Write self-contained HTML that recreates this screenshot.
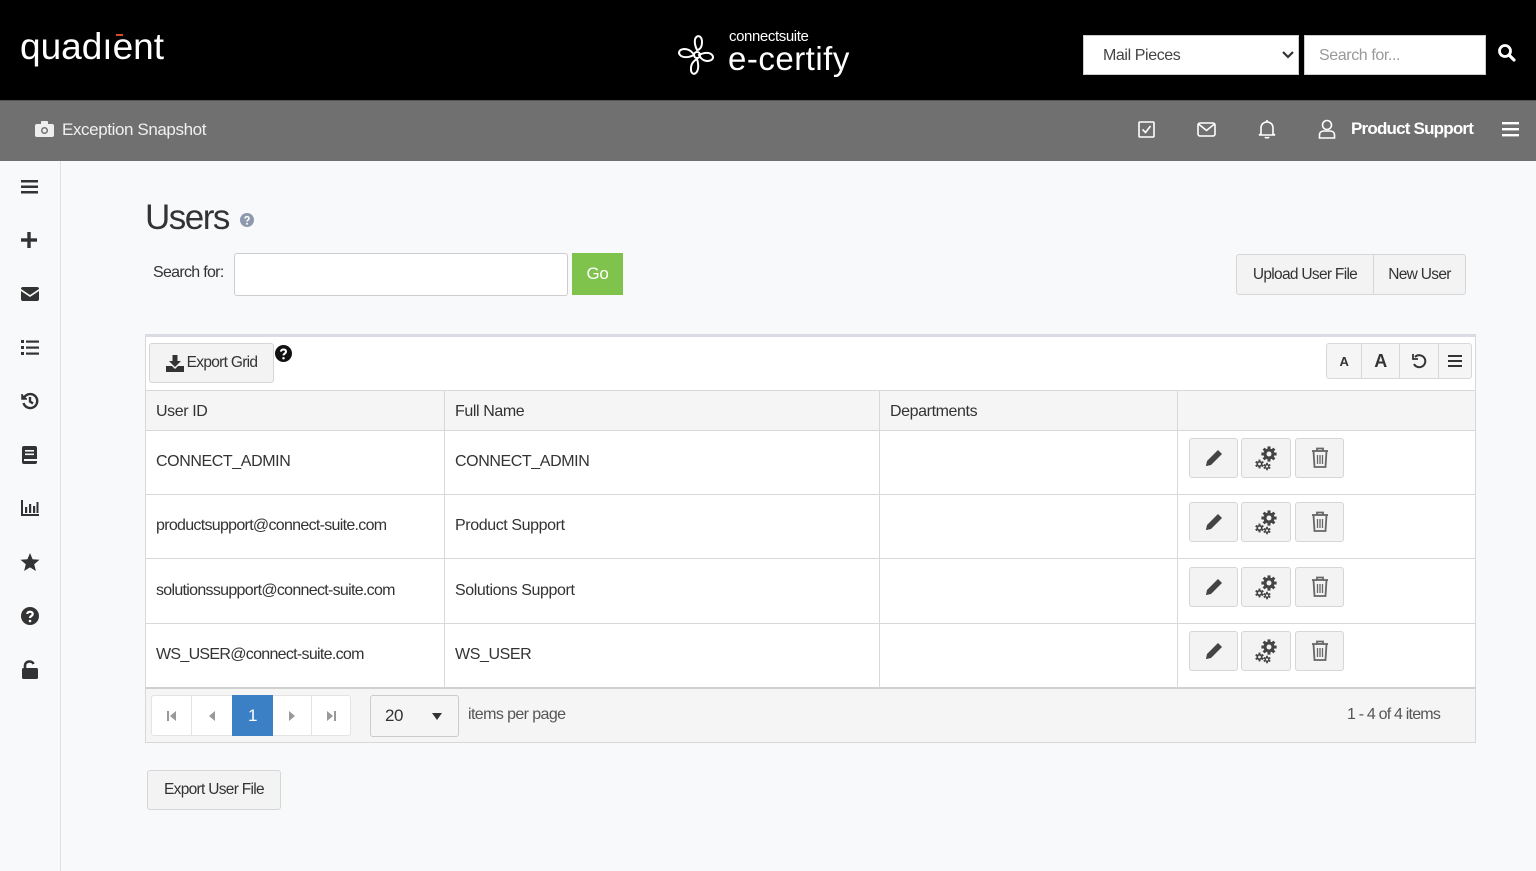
<!DOCTYPE html>
<html><head><meta charset="utf-8"><style>
*{box-sizing:border-box;margin:0;padding:0}
body{width:1536px;height:871px;overflow:hidden;background:#f8f9fb;font-family:"Liberation Sans",sans-serif;color:#333;position:relative;letter-spacing:-0.4px}
.a{position:absolute}
.top{left:0;top:0;width:1536px;height:100px;background:#000}
.bar{left:0;top:100px;width:1536px;height:61px;background:#707070;border-top:1px solid #555}
.side{left:0;top:161px;width:61px;height:710px;border-right:1px solid #dde0e4;background:#f8f9fb}
.btn{background:#f3f3f3;border:1px solid #d6d6d6;border-radius:3px;color:#333;font-size:15.5px;display:flex;align-items:center;justify-content:center}
.cell{font-size:16px;color:#333;display:flex;align-items:center}
.hl{height:1px;background:#d8d8d8;left:145px;width:1331px}
.vl{width:1px;background:#d8d8d8;top:390px;height:298px}
svg{display:block}
</style></head><body>
<div class="a top"></div>
<div class="a" style="left:20px;top:26px;color:#fff;font-size:37px;letter-spacing:0">quadıent</div>
<div class="a" style="left:116px;top:34px;width:7px;height:2px;background:#d84a24"></div>
<svg class="a" style="left:672px;top:30px" width="50" height="50" viewBox="0 0 50 50" fill="none" stroke="#fff" stroke-width="2"><path d="M25 20 C18 5 30 2 30 12 C30 18 27 20 25 20Z"/><path d="M27 25 C40 18 46 30 36 31 C30 31 28 27 27 25Z"/><path d="M25 29 C30 45 18 48 19 38 C19 33 23 30 25 29Z"/><path d="M22 25 C8 32 2 20 12 19 C18 19 21 23 22 25Z"/><circle cx="25" cy="25" r="3"/></svg>
<div class="a" style="left:729px;top:28px;color:#fff;font-size:15px">connectsuite</div>
<div class="a" style="left:728px;top:40px;color:#fff;font-size:33px;letter-spacing:0.5px">e-certify</div>
<div class="a" style="left:1083px;top:35px;width:216px;height:40px;background:#fff;border:1px solid #ccc;font-size:16px;color:#444;padding:11px 0 0 19px">Mail Pieces</div>
<svg class="a" style="left:1282px;top:50px" width="12" height="9" viewBox="0 0 12 9"><path d="M1 2 L6 7 L11 2" stroke="#333" stroke-width="2.2" fill="none"/></svg>
<div class="a" style="left:1304px;top:35px;width:182px;height:40px;background:#fff;border:1px solid #ccc;font-size:16px;color:#999;padding:11px 0 0 14px">Search for...</div>
<svg class="a" style="left:1497px;top:43px" width="20" height="20" viewBox="0 0 20 20"><circle cx="8" cy="8" r="5.5" stroke="#fff" stroke-width="2.8" fill="none"/><path d="M12 12 L17 17" stroke="#fff" stroke-width="3.2" stroke-linecap="round"/></svg>

<div class="a bar"></div>
<svg class="a" style="left:35px;top:121px" width="19" height="16" viewBox="0 0 19 16"><rect x="0" y="3" width="19" height="13" rx="2" fill="#eee"/><rect x="6" y="0" width="7" height="4" rx="1" fill="#eee"/><circle cx="9.5" cy="9.5" r="3.5" fill="#707070"/><circle cx="9.5" cy="9.5" r="2" fill="#eee"/></svg>
<div class="a" style="left:62px;top:120px;color:#f0f0f0;font-size:17px">Exception Snapshot</div>
<svg class="a" style="left:1138px;top:121px" width="17" height="17" viewBox="0 0 17 17" fill="none" stroke="#fff" stroke-width="1.6"><rect x="1" y="1" width="15" height="15" rx="1"/><path d="M4.5 8.5 L7.5 11.5 L12.5 5"/></svg>
<svg class="a" style="left:1197px;top:122px" width="19" height="15" viewBox="0 0 19 15" fill="none" stroke="#fff" stroke-width="1.6"><rect x="1" y="1" width="17" height="13" rx="2"/><path d="M1.5 2 L9.5 8.5 L17.5 2"/></svg>
<svg class="a" style="left:1258px;top:119px" width="18" height="20" viewBox="0 0 18 20" fill="none" stroke="#fff" stroke-width="1.6"><path d="M3 15 L3 9 C3 5 6 3 9 3 C12 3 15 5 15 9 L15 15 L17 16 L1 16 Z"/><path d="M7 18 C7.5 19 10.5 19 11 18"/><path d="M9 1 L9 3"/></svg>
<svg class="a" style="left:1318px;top:119px" width="18" height="20" viewBox="0 0 18 20" fill="none" stroke="#fff" stroke-width="1.6"><circle cx="9" cy="6" r="4.5"/><path d="M1.5 19 L1.5 16 C1.5 13 4 12 6 12 L12 12 C14 12 16.5 13 16.5 16 L16.5 19 Z"/></svg>
<div class="a" style="left:1351px;top:119px;color:#fff;font-size:17px;font-weight:bold;letter-spacing:-0.8px">Product Support</div>
<svg class="a" style="left:1502px;top:122px" width="17" height="15" viewBox="0 0 17 15" fill="#fff"><rect y="0" width="17" height="2.4"/><rect y="6" width="17" height="2.4"/><rect y="12" width="17" height="2.4"/></svg>

<div class="a side"></div>
<svg class="a" style="left:21px;top:180px" width="17" height="14" fill="#333"><rect y="0" width="17" height="2.5"/><rect y="5.5" width="17" height="2.5"/><rect y="11" width="17" height="2.5"/></svg>
<svg class="a" style="left:21px;top:232px" width="16" height="16" fill="#333"><rect x="6.3" y="0" width="3.4" height="16"/><rect x="0" y="6.3" width="16" height="3.4"/></svg>
<svg class="a" style="left:21px;top:287px" width="18" height="14" viewBox="0 0 18 14" fill="#333"><path d="M0 2 Q0 0 2 0 L16 0 Q18 0 18 2 L9 8 Z"/><path d="M0 4 L9 10 L18 4 L18 12 Q18 14 16 14 L2 14 Q0 14 0 12 Z"/></svg>
<svg class="a" style="left:21px;top:340px" width="18" height="15" fill="#333"><rect x="0" y="0" width="3" height="3"/><rect x="5" y="0.5" width="13" height="2.2"/><rect x="0" y="6" width="3" height="3"/><rect x="5" y="6.5" width="13" height="2.2"/><rect x="0" y="12" width="3" height="3"/><rect x="5" y="12.5" width="13" height="2.2"/></svg>
<svg class="a" style="left:21px;top:392px" width="18" height="18" viewBox="0 0 18 18" fill="none" stroke="#333" stroke-width="2.4"><path d="M3.5 5 A7 7 0 1 1 2.5 11"/><path d="M1 2 L1 7 L6 7" fill="#333" stroke-width="1.5"/><path d="M9 5 L9 9.5 L12 11.5"/></svg>
<svg class="a" style="left:22px;top:446px" width="15" height="18" fill="#333"><rect x="0" y="0" width="15" height="18" rx="2"/><rect x="3" y="4" width="9" height="1.6" fill="#f8f9fb"/><rect x="3" y="7.5" width="9" height="1.6" fill="#f8f9fb"/><rect x="2" y="13" width="13" height="2" fill="#f8f9fb"/></svg>
<svg class="a" style="left:21px;top:500px" width="18" height="16" fill="#333"><rect x="0" y="0" width="2" height="16"/><rect x="0" y="14" width="18" height="2"/><rect x="4" y="7" width="2.2" height="6"/><rect x="8" y="4" width="2.2" height="9"/><rect x="12" y="6" width="2.2" height="7"/><rect x="15.5" y="2" width="2" height="11"/></svg>
<svg class="a" style="left:20px;top:553px" width="20" height="19" viewBox="0 0 20 19" fill="#333"><path d="M10 0 L12.6 6.2 L19.5 6.8 L14.2 11.3 L15.9 18 L10 14.4 L4.1 18 L5.8 11.3 L0.5 6.8 L7.4 6.2 Z"/></svg>
<svg class="a" style="left:21px;top:607px" width="18" height="18" viewBox="0 0 18 18"><circle cx="9" cy="9" r="9" fill="#333"/><path d="M6.3 7 C6.3 4 11.7 4 11.7 7 C11.7 9 9 9 9 11" stroke="#fff" stroke-width="2.2" fill="none"/><circle cx="9" cy="14" r="1.3" fill="#fff"/></svg>
<svg class="a" style="left:22px;top:660px" width="16" height="19" viewBox="0 0 16 19"><path d="M3 9 L3 5.5 C3 1 10 0 11.5 4" stroke="#333" stroke-width="2.6" fill="none"/><rect x="0" y="8" width="16" height="11" rx="1.5" fill="#333"/></svg>

<div class="a" style="left:145px;top:198px;font-size:35px;color:#333;letter-spacing:-1.5px">Users</div>
<svg class="a" style="left:240px;top:213px" width="14" height="14" viewBox="0 0 14 14"><circle cx="7" cy="7" r="7" fill="#8e99ad"/><path d="M5 5.5 C5 3 9 3 9 5.5 C9 7 7 7 7 8.5" stroke="#fff" stroke-width="1.6" fill="none"/><circle cx="7" cy="10.8" r="1" fill="#fff"/></svg>
<div class="a" style="left:153px;top:264px;font-size:16px;letter-spacing:-0.7px">Search for:</div>
<div class="a" style="left:234px;top:253px;width:334px;height:43px;background:#fff;border:1px solid #ccc;border-radius:3px"></div>
<div class="a" style="left:572px;top:253px;width:51px;height:42px;background:#7fc24c;color:#fff;font-size:17px;display:flex;align-items:center;justify-content:center">Go</div>
<div class="a btn" style="left:1236px;top:254px;width:138px;height:41px;border-radius:3px 0 0 3px;letter-spacing:-0.7px">Upload User File</div>
<div class="a btn" style="left:1373px;top:254px;width:93px;height:41px;border-radius:0 3px 3px 0;letter-spacing:-0.7px">New User</div>

<div class="a" style="left:145px;top:334px;width:1331px;height:409px;background:#fff;border:1px solid #d8d8d8;border-top:3px solid #d9dde3"></div>
<div class="a btn" style="left:149px;top:343px;width:125px;height:40px;letter-spacing:-0.7px"><svg width="18" height="17" viewBox="0 0 18 17" style="margin-right:3px"><path d="M6.5 0 L11.5 0 L11.5 6 L15 6 L9 12 L3 6 L6.5 6Z" fill="#333"/><path d="M0 11 L6 11 L9 14 L12 11 L18 11 L18 17 L0 17Z" fill="#333"/></svg>Export Grid</div>
<svg class="a" style="left:275px;top:345px" width="17" height="17" viewBox="0 0 18 18"><circle cx="9" cy="9" r="9" fill="#111"/><path d="M6.3 7 C6.3 4 11.7 4 11.7 7 C11.7 9 9 9 9 11" stroke="#fff" stroke-width="2.2" fill="none"/><circle cx="9" cy="14" r="1.3" fill="#fff"/></svg>
<div class="a" style="left:1326px;top:343px;width:146px;height:36px;border:1px solid #d8d8d8;border-radius:3px;background:#f5f5f5;display:flex">
<div style="width:35px;border-right:1px solid #d8d8d8;font:bold 13px 'Liberation Sans';display:flex;align-items:center;justify-content:center">A</div>
<div style="width:38px;border-right:1px solid #d8d8d8;font:bold 18px 'Liberation Sans';display:flex;align-items:center;justify-content:center">A</div>
<div style="width:39px;border-right:1px solid #d8d8d8;display:flex;align-items:center;justify-content:center"><svg width="16" height="16" viewBox="0 0 16 16" fill="none" stroke="#333" stroke-width="2"><path d="M4 4 A6 6 0 1 1 3 11"/><path d="M2 1 L2 6 L7 6" stroke-width="1.8"/></svg></div>
<div style="flex:1;display:flex;align-items:center;justify-content:center"><svg width="14" height="12" fill="#333"><rect width="14" height="2"/><rect y="5" width="14" height="2"/><rect y="10" width="14" height="2"/></svg></div></div>

<div class="a" style="left:146px;top:390px;width:1329px;height:40px;background:#f5f5f5"></div>
<div class="a hl" style="top:390px"></div>
<div class="a hl" style="top:430px"></div>
<div class="a hl" style="top:494px"></div>
<div class="a hl" style="top:558px"></div>
<div class="a hl" style="top:623px"></div>
<div class="a hl" style="top:687px;height:2px;background:#d0d0d0"></div>
<div class="a vl" style="left:444px"></div>
<div class="a vl" style="left:879px"></div>
<div class="a vl" style="left:1177px"></div>
<div class="a" style="left:146px;top:689px;width:1329px;height:53px;background:#f5f5f5"></div>

<div class="a cell" style="left:156px;top:392px;height:40px">User ID</div>
<div class="a cell" style="left:455px;top:392px;height:40px">Full Name</div>
<div class="a cell" style="left:890px;top:392px;height:40px">Departments</div>

<div class="a cell" style="left:156px;top:430px;height:64px">CONNECT_ADMIN</div>
<div class="a cell" style="left:455px;top:430px;height:64px">CONNECT_ADMIN</div>
<div class="a cell" style="left:156px;top:494px;height:64px;letter-spacing:-0.7px">productsupport@connect-suite.com</div>
<div class="a cell" style="left:455px;top:494px;height:64px">Product Support</div>
<div class="a cell" style="left:156px;top:558px;height:65px;letter-spacing:-0.7px">solutionssupport@connect-suite.com</div>
<div class="a cell" style="left:455px;top:558px;height:65px">Solutions Support</div>
<div class="a cell" style="left:156px;top:623px;height:64px;letter-spacing:-0.7px">WS_USER@connect-suite.com</div>
<div class="a cell" style="left:455px;top:623px;height:64px">WS_USER</div>

<div id="acts"></div>
<script>
function gear(cx,cy,r,t,n){var s='';for(var i=0;i<n;i++){s+='<rect x="'+(cx-t/2)+'" y="'+(cy-r-t*0.7)+'" width="'+t+'" height="'+(r+t*0.7)+'" transform="rotate('+(i*360/n)+' '+cx+' '+cy+')"/>';}
return s+'<circle cx="'+cx+'" cy="'+cy+'" r="'+r+'"/><circle cx="'+cx+'" cy="'+cy+'" r="'+(r*0.45)+'" fill="#f3f3f3"/>';}
var G='<svg width="28" height="28" viewBox="0 0 28 28" fill="#444">'+gear(17,10,5.5,3,8)+gear(7.5,20,3,2,6)+gear(15,22.5,2.5,1.8,6)+'</svg>';
var ys=[438,502,567,631],h='';
ys.forEach(function(y){
h+='<div class="a btn" style="left:1189px;top:'+y+'px;width:49px;height:40px"><svg width="22" height="22" viewBox="0 0 22 22"><path d="M3 19 L4 14 L15 3 L19 7 L8 18 Z" fill="#444"/><path d="M3 19 L4 15 L7 18Z" fill="#444"/></svg></div>';
h+='<div class="a btn" style="left:1241px;top:'+y+'px;width:50px;height:40px">'+G+'</div>';
h+='<div class="a btn" style="left:1295px;top:'+y+'px;width:49px;height:40px"><svg width="20" height="22" viewBox="0 0 20 22" fill="none" stroke="#666" stroke-width="1.8"><path d="M2 4 L18 4"/><path d="M7 4 L7 1.5 L13 1.5 L13 4"/><path d="M3.5 4 L4.5 20 L15.5 20 L16.5 4"/><path d="M7.5 8 L7.5 17 M10 8 L10 17 M12.5 8 L12.5 17" stroke-width="1.3"/></svg></div>';
});
document.getElementById('acts').innerHTML=h;
</script>

<div class="a" style="left:151px;top:695px;width:200px;height:41px;background:#fff;border:1px solid #e3e3e3;border-radius:3px;display:flex;font-size:13px;color:#999">
<div style="width:40px;display:flex;align-items:center;justify-content:center;border-right:1px solid #e3e3e3"><svg width="10" height="10" fill="#999"><rect width="2" height="10"/><path d="M9 0 L9 10 L3 5Z"/></svg></div>
<div style="width:40px;display:flex;align-items:center;justify-content:center"><svg width="8" height="10" fill="#999"><path d="M7 0 L7 10 L1 5Z"/></svg></div>
<div style="width:41px;background:#3b7fc4;color:#fff;font-size:17px;display:flex;align-items:center;justify-content:center;margin-top:-1px;margin-bottom:-1px">1</div>
<div style="width:39px;display:flex;align-items:center;justify-content:center;border-right:1px solid #e3e3e3"><svg width="8" height="10" fill="#999"><path d="M1 0 L1 10 L7 5Z"/></svg></div>
<div style="flex:1;display:flex;align-items:center;justify-content:center"><svg width="10" height="10" fill="#999"><path d="M1 0 L1 10 L7 5Z"/><rect x="8" width="2" height="10"/></svg></div></div>
<div class="a" style="left:370px;top:695px;width:89px;height:42px;background:#f5f5f5;border:1px solid #ccc;border-radius:3px;font-size:17px;padding:10px 0 0 14px">20<svg class="a" style="left:61px;top:17px" width="10" height="7"><path d="M0 0 L10 0 L5 7Z" fill="#333"/></svg></div>
<div class="a" style="left:468px;top:706px;font-size:16px;color:#555;letter-spacing:-0.6px">items per page</div>
<div class="a" style="left:1347px;top:706px;font-size:16px;color:#555;letter-spacing:-0.8px">1 - 4 of 4 items</div>

<div class="a btn" style="left:147px;top:770px;width:134px;height:40px;letter-spacing:-0.7px">Export User File</div>
</body></html>
